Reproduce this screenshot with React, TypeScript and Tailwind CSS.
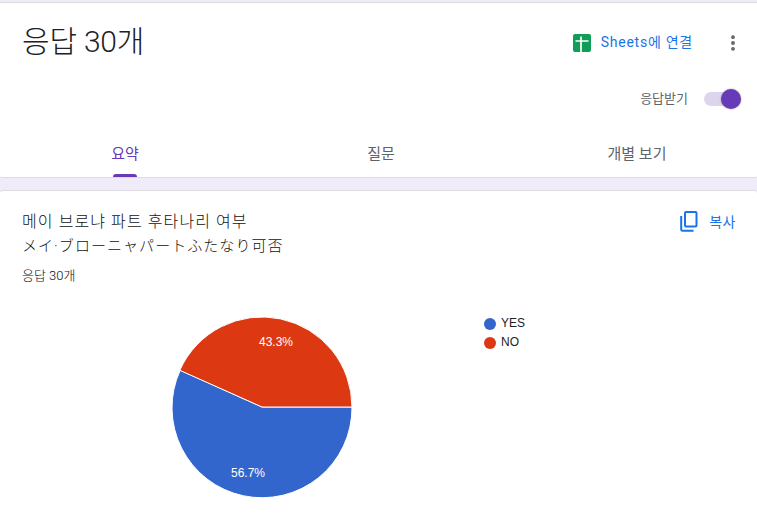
import { MoreVertical } from 'lucide-react';

const font = { fontFamily: 'Roboto, "Noto Sans CJK KR", "Noto Sans CJK JP", sans-serif' };

function SheetsIcon() {
  return (
    <svg width="18" height="18" viewBox="0 0 18 18" className="shrink-0">
      <rect width="18" height="18" rx="2" fill="#0f9d58" />
      <path d="M2.5 7h13M8 2.5V18" stroke="#fff" strokeWidth="1.7" fill="none" />
    </svg>
  );
}

function CopyIcon() {
  return (
    <svg width="18" height="21" viewBox="0 0 18 21" fill="none" stroke="#1a73e8" strokeWidth="2">
      <rect x="5" y="1" width="11.5" height="14.5" rx="1" />
      <path d="M1.2 5v13.5a1.3 1.3 0 0 0 1.3 1.3h11" />
    </svg>
  );
}

function Pie() {
  return (
    <svg width="182" height="182" viewBox="0 0 182 182" className="block">
      <path d="M91 91 L9.2 54.2 A90 90 0 1 0 181 91 Z" fill="#3366cc" stroke="#fff" strokeWidth="1" />
      <path d="M91 91 L181 91 A90 90 0 0 0 8.8 54.3 Z" fill="#dc3912" stroke="#fff" strokeWidth="1" />
      <text x="105" y="30" textAnchor="middle" fill="#fff" fontSize="12" fontFamily="Arimo, 'Liberation Sans', sans-serif">43.3%</text>
      <text x="77" y="161" textAnchor="middle" fill="#fff" fontSize="12" fontFamily="Arimo, 'Liberation Sans', sans-serif">56.7%</text>
    </svg>
  );
}

export default function App() {
  return (
    <div className="w-[757px] h-[521px] overflow-hidden bg-[#f0ebf8]" style={font}>
      <div className="h-[3px] border-b border-[#dadce0]" />
      <div className="bg-white h-[175px] border-b border-[#dadce0] rounded-b-[2px] flex flex-col">
        <div className="flex items-center justify-between h-[78px] pl-[22px] pr-[14px]">
          <h1 className="text-[30px] leading-[40px] font-light tracking-[-0.2px] text-[#202124] -mt-[1px]">응답 30개</h1>
          <div className="flex items-center mt-[1px]">
            <SheetsIcon />
            <span className="ml-[10px] text-[14px] text-[#1a73e8] tracking-[0.75px]">Sheets에 연결</span>
            <MoreVertical size={20} className="ml-[30px] text-[#5f6368]" strokeWidth={2.6} />
          </div>
        </div>
        <div className="flex items-center justify-end h-[40px] pr-[19px] -mt-[2px]">
          <span className="text-[13px] text-[#5f6368] mr-[16px]">응답받기</span>
          <div className="relative w-[34px] h-[14px] rounded-full bg-[#ddd5ee]">
            <div className="absolute -right-[3px] -top-[3px] w-[20px] h-[20px] rounded-full bg-[#673ab7] shadow-[0_0_2px_rgba(0,0,0,0.4)]" />
          </div>
        </div>
        <div className="flex flex-1 mt-[3px] -ml-[3px]">
          <div className="w-[256px] shrink-0 flex flex-col items-center justify-end">
            <span className="text-[15px] text-[#673ab7] mb-[9px]">요약</span>
            <div className="w-[24px] h-[3px] rounded-t-[3px] bg-[#673ab7]" />
          </div>
          <div className="w-[256px] shrink-0 flex flex-col items-center justify-end">
            <span className="text-[15px] text-[#5f6368] mb-[12px]">질문</span>
          </div>
          <div className="w-[256px] shrink-0 flex flex-col items-center justify-end">
            <span className="text-[15px] text-[#5f6368] mb-[12px]">개별 보기</span>
          </div>
        </div>
      </div>
      <div className="bg-white mt-[12px] h-[331px] border-t border-[#dadce0] rounded-t-[3px] pl-[22px] pr-[21px] pt-[19px]">
        <div className="flex justify-between items-start">
          <div className="leading-[24px] text-[#111]">
            <div className="text-[16px] tracking-[1.1px] font-light">메이 브로냐 파트 후타나리 여부</div>
            <div className="text-[15px] tracking-[1.05px] font-light">メイ·ブローニャパートふたなり可否</div>
          </div>
          <div className="flex items-center">
            <CopyIcon />
            <span className="ml-[11px] mt-[2px] text-[14px] tracking-[0.5px] text-[#1a73e8]">복사</span>
          </div>
        </div>
        <div className="text-[13px] leading-[16px] font-light text-[#111] mt-[10px]">응답 30개</div>
        <div className="flex items-start mt-[32px] ml-[149px]">
          <Pie />
          <div className="ml-[131px] -mt-[2px] text-[12px] leading-[19px] text-[#222]" style={{ fontFamily: '"Liberation Sans", sans-serif' }}>
            <div className="flex items-center gap-[5px]">
              <span className="w-[12px] h-[12px] rounded-full bg-[#3366cc]" />
              YES
            </div>
            <div className="flex items-center gap-[5px]">
              <span className="w-[12px] h-[12px] rounded-full bg-[#dc3912]" />
              NO
            </div>
          </div>
        </div>
      </div>
    </div>
  );
}
